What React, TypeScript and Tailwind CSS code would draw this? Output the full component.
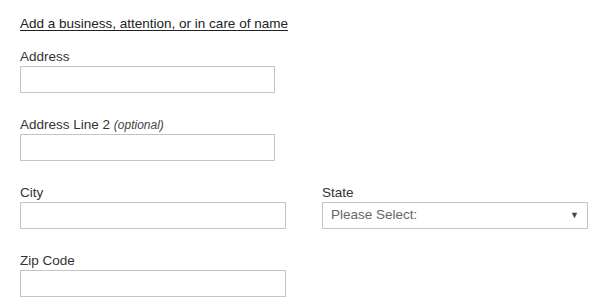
import React from "react";

const font = { fontFamily: '"Liberation Sans", Arial, sans-serif' };

function Label({ children }: { children: React.ReactNode }) {
  return <div className="text-[13.5px] pt-[2px] leading-[18px] text-[#333]">{children}</div>;
}

function Field({ label }: { label: React.ReactNode }) {
  return (
    <div>
      <Label>{label}</Label>
      <div className="h-[27px] border border-[#c4c4c4] bg-white" />
    </div>
  );
}

export default function App() {
  return (
    <div className="w-[610px] h-[307px] bg-white pl-[20px] pt-[13px]" style={font}>
      <div className="text-[13.5px] pt-[2px] leading-[18px] text-[#222] underline underline-offset-[2px]">
        Add a business, attention, or in care of name
      </div>
      <div className="mt-[13px] w-[255px]">
        <Field label="Address" />
      </div>
      <div className="mt-[21px] w-[255px]">
        <Field
          label={
            <>
              Address Line 2 <span className="italic text-[12px] text-[#444]">(optional)</span>
            </>
          }
        />
      </div>
      <div className="mt-[21px] grid grid-cols-[266px_266px] gap-x-[36px]">
        <Field label="City" />
        <div>
          <Label>State</Label>
          <div className="h-[27px] border border-[#c4c4c4] bg-white flex items-center justify-between pl-[8px] pr-[8px]">
            <span className="text-[13.5px] text-[#666]">Please Select:</span>
            <span className="text-[9px] text-[#444]">▼</span>
          </div>
        </div>
      </div>
      <div className="mt-[21px] w-[266px]">
        <Field label="Zip Code" />
      </div>
    </div>
  );
}
